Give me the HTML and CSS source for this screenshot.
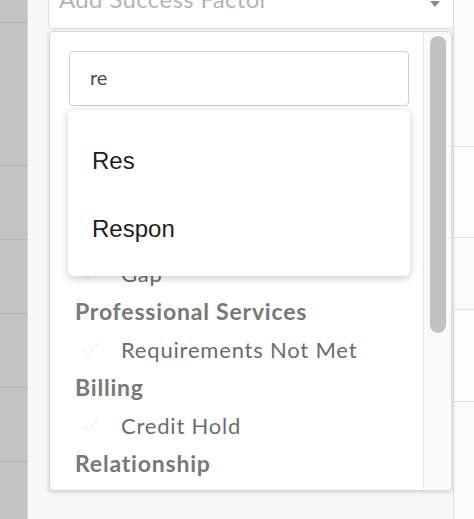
FILE: index.html
```html
<!DOCTYPE html>
<html lang="en">
<head>
  <meta charset="UTF-8">
  <meta name="viewport" content="width=device-width, initial-scale=1.0">
  <title>Add Success Factor</title>
  <link rel="stylesheet" href="styles.css">
</head>
<body>
  <div class="page">
    <div class="rail">
      <div class="rail-row r1"></div>
      <div class="rail-row r2"></div>
      <div class="rail-row"></div>
      <div class="rail-row"></div>
      <div class="rail-row"></div>
      <div class="rail-row"></div>
      <div class="rail-row last"></div>
    </div>
    <div class="canvas"></div>
    <div class="side">
      <div class="side-row s1"></div>
      <div class="side-row s2"></div>
      <div class="side-row s3"></div>
      <div class="side-row s4"></div>
      <div class="side-row last"></div>
    </div>

    <!-- dropdown opened over the table -->
    <div class="picker">
      <div class="select">
        <span class="placeholder">Add Success Factor</span>
        <span class="caret"></span>
      </div>
      <div class="panel">
        <div class="panel-body">
          <input class="search" type="text" value="re">

          <ul class="options">
            <li class="group">Product</li>
            <li class="option">
              <svg class="check" viewBox="0 0 20 20"><polyline points="3,11 8,16 18,4"/></svg>
              Bugs
            </li>
            <li class="group">Resourcing</li>
            <li class="option">
              <svg class="check" viewBox="0 0 20 20"><polyline points="3,11 8,16 18,4"/></svg>
              Gap
            </li>
            <li class="group">Professional Services</li>
            <li class="option">
              <svg class="check" viewBox="0 0 20 20"><polyline points="3,11 8,16 18,4"/></svg>
              Requirements Not Met
            </li>
            <li class="group">Billing</li>
            <li class="option">
              <svg class="check" viewBox="0 0 20 20"><polyline points="3,11 8,16 18,4"/></svg>
              Credit Hold
            </li>
            <li class="group">Relationship</li>
          </ul>

          <div class="suggest">
            <div class="suggest-item">Res</div>
            <div class="suggest-item">Respon</div>
          </div>
        </div>
        <div class="scrollbar"><div class="thumb"></div></div>
      </div>
    </div>
  </div>
</body>
</html>
```

FILE: styles.css
```css
* {
  margin: 0;
  padding: 0;
  box-sizing: border-box;
}
body {
  font-family: 'Lato', sans-serif;
  background: #f7f7f7;
  overflow: hidden;
}
.page {
  position: relative;
  display: grid;
  grid-template-columns: 28px 1fr 21px;
  height: 519px;
  overflow: hidden;
}
.rail {
  display: flex;
  flex-direction: column;
  background: #c3c3c3;
  border-right: 1px solid #d6d6d6;
}
.rail-row {
  height: 74px;
  border-bottom: 1px solid #b3b3b3;
}
.rail-row.r1 {
  height: 23px;
}
.rail-row.r2 {
  height: 143px;
}
.rail-row.last {
  flex: 1;
  border-bottom: none;
}
.canvas {
  background: #f7f7f7;
}
.side {
  display: flex;
  flex-direction: column;
  background: #fbfbfb;
  border-left: 1px solid #e0e0e0;
}
.side-row {
  border-bottom: 1px solid #e0e0e0;
}
.side-row.s1 {
  height: 147px;
}
.side-row.s2 {
  height: 91px;
  background: #fefefe;
}
.side-row.s3 {
  height: 72px;
}
.side-row.s4 {
  height: 92px;
  background: #fefefe;
}
.side-row.last {
  flex: 1;
  border-bottom: none;
}

/* picker */
.picker {
  position: absolute;
  left: 48px;
  top: -22px;
  width: 406px;
}
.select {
  display: flex;
  align-items: center;
  justify-content: space-between;
  height: 51px;
  padding: 0 13px 0 10px;
  background: #fff;
  border: 1px solid #dcdcdc;
  border-radius: 4px;
}
.placeholder {
  font-size: 24px;
  letter-spacing: 0.35px;
  color: #b4b4b4;
  padding-bottom: 10px;
}
.caret {
  width: 0;
  height: 0;
  border-left: 5px solid transparent;
  border-right: 5px solid transparent;
  border-top: 6px solid #8a8a8a;
  margin-top: 1px;
}
.panel {
  display: flex;
  width: 403px;
  height: 460px;
  margin: 2px 0 0 1px;
  background: #fff;
  border: 1px solid #d9d9d9;
  border-radius: 4px;
  box-shadow: 0 1px 4px rgba(0, 0, 0, 0.16);
  overflow: hidden;
}
.panel-body {
  position: relative;
  flex: 1;
  padding: 19px 14px 0 19px;
}
.search {
  display: block;
  width: 340px;
  height: 55px;
  padding: 0 20px 3px;
  font-family: 'Lato', sans-serif;
  font-size: 20px;
  color: #4a4a4a;
  background: #fff;
  border: 1px solid #d0d0d0;
  border-radius: 4px;
  outline: none;
}
.options {
  list-style: none;
  margin-top: 34px;
}
.options li {
  display: flex;
  align-items: center;
  height: 38px;
}
.group {
  padding-left: 6px;
  font-size: 23px;
  letter-spacing: 0.8px;
  font-weight: bold;
  color: #787878;
}
.option {
  padding-left: 11px;
  font-size: 22px;
  letter-spacing: 0.8px;
  color: #6c6c6c;
}
.check {
  width: 20px;
  height: 20px;
  margin-right: 21px;
  fill: none;
  stroke: #f2f2f2;
  stroke-width: 1.5;
}
.suggest {
  position: absolute;
  left: 18px;
  top: 78px;
  width: 342px;
  height: 166px;
  padding: 17px 0 13px;
  background: #fff;
  border-radius: 6px;
  box-shadow: 0 2px 8px rgba(0, 0, 0, 0.22);
}
.suggest-item {
  display: flex;
  align-items: center;
  height: 68px;
  padding-left: 24px;
  font-family: 'Liberation Sans', sans-serif;
  font-size: 24px;
  color: #1e1e1e;
}
.scrollbar {
  width: 28px;
  padding: 4px 0 0 6px;
  background: #fafafa;
  border-left: 1px solid #e6e6e6;
}
.thumb {
  width: 16px;
  height: 297px;
  background: #c2c2c2;
  border-radius: 8px;
}
```
